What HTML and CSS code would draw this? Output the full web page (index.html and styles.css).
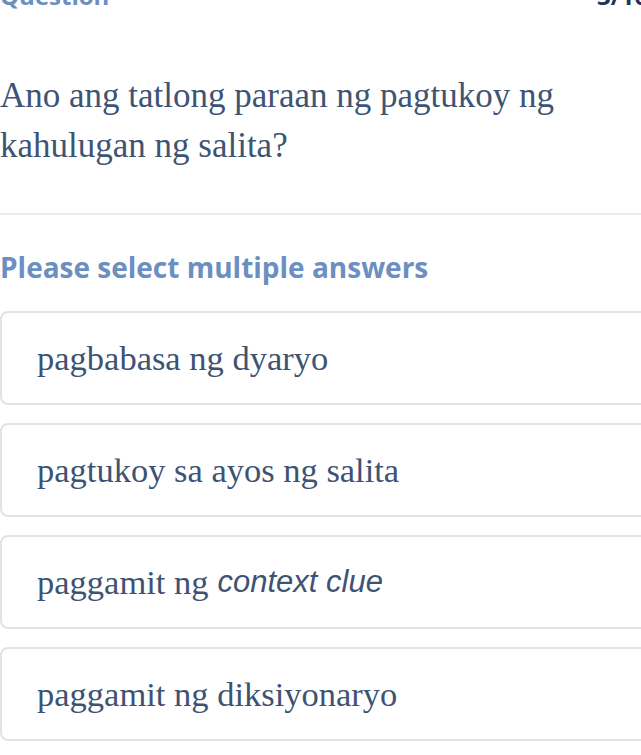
FILE: index.html
```html
<!DOCTYPE html>
<html lang="tl">
<head>
<meta charset="utf-8">
<title>Question 3/10</title>
<link rel="stylesheet" href="styles.css">
</head>
<body>
<main class="quiz">
  <header class="quiz-head">
    <span class="quiz-label">Question</span>
    <span class="quiz-count">3/10</span>
  </header>
  <h1 class="quiz-question">Ano ang tatlong paraan ng pagtukoy ng kahulugan ng salita?</h1>
  <hr class="quiz-rule">
  <p class="quiz-hint">Please select multiple answers</p>
  <ul class="choices">
    <li class="choice">pagbabasa ng dyaryo</li>
    <li class="choice">pagtukoy sa ayos ng salita</li>
    <li class="choice">paggamit ng <em class="term">context clue</em></li>
    <li class="choice">paggamit ng diksiyonaryo</li>
  </ul>
</main>
</body>
</html>
```

FILE: styles.css
```css
html, body {
  margin: 0;
  padding: 0;
  background: #ffffff;
  overflow: hidden;
}

.quiz {
  width: 648px;
  margin-top: -19px;
}

.quiz-head {
  display: flex;
  justify-content: space-between;
  align-items: baseline;
  font-family: "Open Sans", "Liberation Sans", sans-serif;
  font-weight: 700;
  font-size: 24px;
  line-height: 30px;
}

.quiz-label {
  color: #6b8fc0;
}

.quiz-count {
  color: #1e3556;
}

.quiz-question {
  margin: 60px 0 0;
  font-family: "Liberation Serif", serif;
  font-weight: 400;
  font-size: 35px;
  line-height: 50px;
  color: #3d5475;
  width: 600px;
}

.quiz-rule {
  margin: 42px 0 0;
  border: 0;
  height: 2px;
  background: #e5edf5;
}

.quiz-hint {
  margin: 36px 0 0;
  font-family: "Open Sans", "Liberation Sans", sans-serif;
  font-weight: 700;
  font-size: 28px;
  line-height: 32px;
  color: #6b8fc0;
}

.choices {
  list-style: none;
  margin: 28px 0 0;
  padding: 0;
  display: flex;
  flex-direction: column;
  gap: 18px;
}

.choice {
  box-sizing: border-box;
  height: 94px;
  display: flex;
  align-items: center;
  padding-left: 35px;
  border: 2px solid #dde3e8;
  border-radius: 8px;
  font-family: "Liberation Serif", serif;
  font-size: 34.5px;
  color: #3e5373;
}

.term {
  font-family: "Liberation Sans", sans-serif;
  font-style: italic;
  margin-left: 9px;
  font-size: 31px;
}
```
